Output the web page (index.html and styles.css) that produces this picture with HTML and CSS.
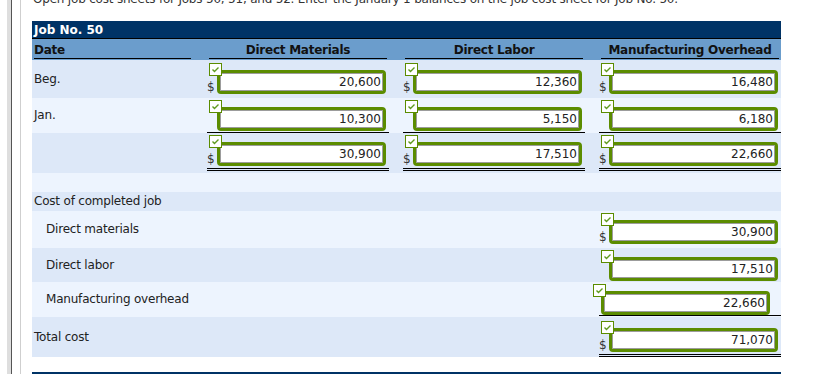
FILE: index.html
```html
<!DOCTYPE html>
<html lang="en">
<head>
<meta charset="utf-8">
<title>Job No. 50</title>
<link rel="stylesheet" href="styles.css">
</head>
<body>
<div class="frame">
 <div class="frame-inner">
  <div class="content">
   <p class="prompt">Open job cost sheets for Jobs 50, 51, and 52. Enter the January 1 balances on the job cost sheet for Job No. 50.</p>
   <div class="sheet">
    <div class="title">Job No. 50</div>
    <div class="row head">
     <div class="hc first"><div class="hc-in">Date</div></div>
     <div class="hc"><div class="hc-in center">Direct Materials</div></div>
     <div class="hc"><div class="hc-in center">Direct Labor</div></div>
     <div class="hc last"><div class="hc-in center">Manufacturing Overhead</div></div>
    </div>

    <div class="row dark r-beg">
     <div class="label">Beg.</div>
     <div class="cell"><div class="inner"><span class="dollar">$</span><span class="field"><span class="check"><svg viewBox="0 0 11 11" width="11" height="11"><path d="M2.5 5.5 L4.5 7.5 L8.5 3.5" fill="none" stroke="#5f9a1e" stroke-width="1.4"/></svg></span><span class="box">20,600</span></span></div></div>
     <div class="cell"><div class="inner"><span class="dollar">$</span><span class="field"><span class="check"><svg viewBox="0 0 11 11" width="11" height="11"><path d="M2.5 5.5 L4.5 7.5 L8.5 3.5" fill="none" stroke="#5f9a1e" stroke-width="1.4"/></svg></span><span class="box">12,360</span></span></div></div>
     <div class="cell last"><div class="inner"><span class="dollar">$</span><span class="field"><span class="check"><svg viewBox="0 0 11 11" width="11" height="11"><path d="M2.5 5.5 L4.5 7.5 L8.5 3.5" fill="none" stroke="#5f9a1e" stroke-width="1.4"/></svg></span><span class="box">16,480</span></span></div></div>
    </div>

    <div class="row light r-jan">
     <div class="label">Jan.</div>
     <div class="cell"><div class="inner"><span class="dollar"></span><span class="field"><span class="check"><svg viewBox="0 0 11 11" width="11" height="11"><path d="M2.5 5.5 L4.5 7.5 L8.5 3.5" fill="none" stroke="#5f9a1e" stroke-width="1.4"/></svg></span><span class="box">10,300</span></span></div></div>
     <div class="cell"><div class="inner"><span class="dollar"></span><span class="field"><span class="check"><svg viewBox="0 0 11 11" width="11" height="11"><path d="M2.5 5.5 L4.5 7.5 L8.5 3.5" fill="none" stroke="#5f9a1e" stroke-width="1.4"/></svg></span><span class="box">5,150</span></span></div></div>
     <div class="cell last"><div class="inner"><span class="dollar"></span><span class="field"><span class="check"><svg viewBox="0 0 11 11" width="11" height="11"><path d="M2.5 5.5 L4.5 7.5 L8.5 3.5" fill="none" stroke="#5f9a1e" stroke-width="1.4"/></svg></span><span class="box">6,180</span></span></div></div>
    </div>

    <div class="row dark r-tot">
     <div class="label"></div>
     <div class="cell"><div class="inner"><span class="dollar">$</span><span class="field"><span class="check"><svg viewBox="0 0 11 11" width="11" height="11"><path d="M2.5 5.5 L4.5 7.5 L8.5 3.5" fill="none" stroke="#5f9a1e" stroke-width="1.4"/></svg></span><span class="box">30,900</span></span></div></div>
     <div class="cell"><div class="inner"><span class="dollar">$</span><span class="field"><span class="check"><svg viewBox="0 0 11 11" width="11" height="11"><path d="M2.5 5.5 L4.5 7.5 L8.5 3.5" fill="none" stroke="#5f9a1e" stroke-width="1.4"/></svg></span><span class="box">17,510</span></span></div></div>
     <div class="cell last"><div class="inner"><span class="dollar">$</span><span class="field"><span class="check"><svg viewBox="0 0 11 11" width="11" height="11"><path d="M2.5 5.5 L4.5 7.5 L8.5 3.5" fill="none" stroke="#5f9a1e" stroke-width="1.4"/></svg></span><span class="box">22,660</span></span></div></div>
    </div>

    <div class="row light r-empty"></div>

    <div class="row dark r-cost">
     <div class="label wide">Cost of completed job</div>
    </div>

    <div class="row light r-dm">
     <div class="label wide indent">Direct materials</div>
     <div class="cell last"><div class="inner"><span class="dollar">$</span><span class="field"><span class="check"><svg viewBox="0 0 11 11" width="11" height="11"><path d="M2.5 5.5 L4.5 7.5 L8.5 3.5" fill="none" stroke="#5f9a1e" stroke-width="1.4"/></svg></span><span class="box">30,900</span></span></div></div>
    </div>

    <div class="row dark r-dl">
     <div class="label wide indent">Direct labor</div>
     <div class="cell last"><div class="inner"><span class="dollar"></span><span class="field"><span class="check"><svg viewBox="0 0 11 11" width="11" height="11"><path d="M2.5 5.5 L4.5 7.5 L8.5 3.5" fill="none" stroke="#5f9a1e" stroke-width="1.4"/></svg></span><span class="box">17,510</span></span></div></div>
    </div>

    <div class="row light r-mo">
     <div class="label wide indent">Manufacturing overhead</div>
     <div class="cell last"><div class="inner"><span class="dollar narrow"></span><span class="field"><span class="check"><svg viewBox="0 0 11 11" width="11" height="11"><path d="M2.5 5.5 L4.5 7.5 L8.5 3.5" fill="none" stroke="#5f9a1e" stroke-width="1.4"/></svg></span><span class="box">22,660</span></span></div></div>
    </div>

    <div class="row dark r-tc">
     <div class="label wide">Total cost</div>
     <div class="cell last"><div class="inner"><span class="dollar">$</span><span class="field"><span class="check"><svg viewBox="0 0 11 11" width="11" height="11"><path d="M2.5 5.5 L4.5 7.5 L8.5 3.5" fill="none" stroke="#5f9a1e" stroke-width="1.4"/></svg></span><span class="box">71,070</span></span></div></div>
    </div>

    <div class="foot"></div>
   </div>
  </div>
 </div>
</div>
</body>
</html>
```

FILE: styles.css
```css
html, body {
  margin: 0;
  padding: 0;
  background: #fff;
}

body {
  font-family: "DejaVu Sans", Verdana, sans-serif;
  font-size: 12px;
  color: #222;
  overflow: hidden;
}

.frame {
  margin-left: 7px;
  border-left: 4px solid #dedede;
  min-height: 374px;
}

.frame-inner {
  border-left: 1px solid #555;
  padding-left: 8px;
  min-height: 374px;
}

.content {
  border-left: 1px solid #cfcfcf;
  padding-left: 11px;
  min-height: 374px;
}

.prompt {
  margin: -9px 0 14px 1px;
  line-height: 16px;
  letter-spacing: -0.2px;
  color: #333;
  white-space: nowrap;
}

.sheet {
  width: 749px;
}

.title {
  background: #003366;
  color: #fff;
  font-weight: bold;
  line-height: 15px;
  padding: 2px 0 0 2px;
  border-bottom: 1px solid #000;
}

.row {
  display: grid;
  grid-template-columns: 168px 196px 196px 189px;
}

.dark {
  background: #dde8f8;
}

.light {
  background: #edf4fe;
}

.head {
  background: #6b9dcc;
  height: 21px;
}

.hc {
  padding: 4px 9px 0;
}

.hc.first {
  padding-left: 2px;
}

.hc.last {
  padding-right: 2px;
}

.hc-in {
  line-height: 15px;
  border-bottom: 1px solid #000;
  font-weight: bold;
  letter-spacing: -0.25px;
  color: #111;
}

.center {
  text-align: center;
}

.label {
  align-self: center;
  padding-left: 2px;
  letter-spacing: -0.2px;
  color: #222;
  line-height: 15px;
}

.label.wide {
  grid-column: 1 / 4;
}

.label.indent {
  padding-left: 14px;
}

.cell {
  padding: 0 7px;
}

.cell.last {
  padding-right: 0;
  grid-column: 4;
}

.inner {
  display: flex;
  align-items: flex-end;
}

.dollar {
  width: 10px;
  flex: none;
  line-height: 14px;
  color: #333;
}

.dollar.narrow {
  width: 2px;
}

.field {
  position: relative;
  width: 169px;
  height: 24px;
  flex: none;
}

.box {
  display: block;
  box-sizing: border-box;
  width: 169px;
  height: 24px;
  border: 3px solid #5b8c00;
  border-radius: 4px;
  box-shadow: inset 0 0 0 1px #9c9c9c;
  background: #fff;
  text-align: right;
  padding: 0 2px 0 0;
  line-height: 18px;
  color: #222;
}

.check {
  position: absolute;
  left: -8px;
  top: -7px;
  width: 11px;
  height: 11px;
  border: 1px solid #5b8c00;
  background: #fff;
  z-index: 1;
  display: block;
}

.check svg {
  display: block;
}

/* row geometry */
.r-beg .inner {
  padding: 10px 0 4px;
}

.r-jan .inner {
  padding: 9px 0 1px;
  border-bottom: 1px solid #000;
}

.r-tot .cell {
  padding-bottom: 2px;
}

.r-tot .inner {
  padding: 9px 0 2px;
  border-bottom: 3px double #000;
}

.r-empty {
  height: 19px;
}

.r-cost {
  height: 19px;
}

.r-dm .inner {
  padding: 9px 0 4px;
}

.r-dl .inner {
  padding: 9px 0 1px;
}

.r-mo .cell {
  padding-bottom: 1px;
}

.r-mo .inner {
  padding: 9px 0 0;
  border-bottom: 1px solid #000;
}

.r-tc .inner {
  padding: 11px 0 2px;
  border-bottom: 3px double #000;
}

.foot {
  margin-top: 15px;
  height: 4px;
  background: #003366;
}
```
